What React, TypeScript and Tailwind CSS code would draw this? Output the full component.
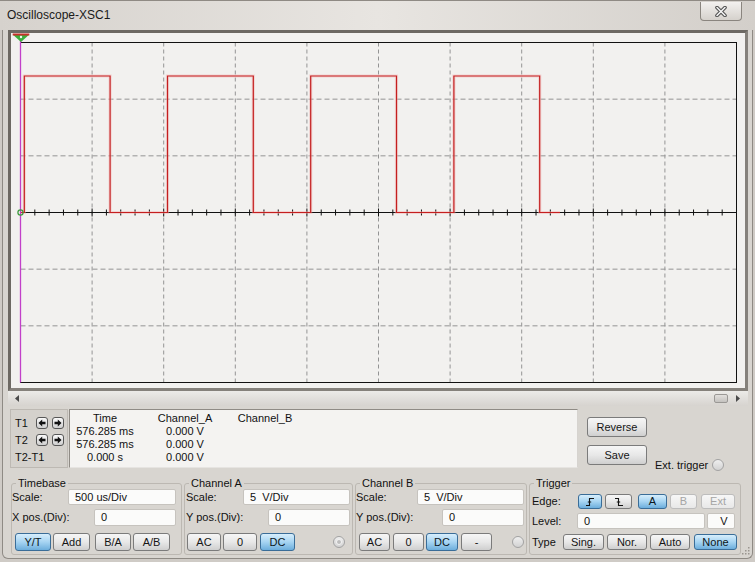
import React from "react";

type BtnKind = "normal" | "on" | "off";

function Btn({ children, className = "", kind = "normal" }: { children: React.ReactNode; className?: string; kind?: BtnKind }) {
  const skin =
    kind === "on"
      ? "border-[#3a6d98] bg-linear-to-b from-[#d7eefc] via-[#a6d4f2] to-[#6caedc] text-[#0b1620]"
      : kind === "off"
        ? "border-[#bdbdbd] bg-linear-to-b from-[#f7f7f7] to-[#e8e8e8] text-[#a5a5a5]"
        : "border-[#7b7b7b] bg-linear-to-b from-[#f6f6f6] via-[#e8e8e8] to-[#cfcfcf] text-[#151515]";
  return (
    <div className={`flex h-full shrink-0 items-center justify-center rounded-[3px] border text-[11px] leading-none ${skin} ${className}`}>
      {children}
    </div>
  );
}

function Field({ children, className = "" }: { children: React.ReactNode; className?: string }) {
  return (
    <div className={`flex h-full shrink-0 items-center whitespace-pre rounded-[2px] border border-[#c6c3be] bg-[#fbfbfa] pl-[6px] text-[11px] leading-none ${className}`}>
      {children}
    </div>
  );
}

function Radio({ dot = false, className = "" }: { dot?: boolean; className?: string }) {
  return (
    <div className={`flex h-[12px] w-[12px] shrink-0 items-center justify-center rounded-full border border-[#a2a2a2] bg-linear-to-b from-[#efefef] to-[#d2d2d2] ${className}`}>
      {dot && <div className="h-[6px] w-[6px] rounded-full border border-[#f4f4f4] bg-[#bdbdbd]" />}
    </div>
  );
}

function Group({ title, className = "", children }: { title: string; className?: string; children: React.ReactNode }) {
  return (
    <fieldset className={`h-[78px] shrink-0 rounded-[3px] border border-[#bcb8b2] p-0 ${className}`}>
      <legend className="ml-[4px] px-[2px] text-[11px] leading-[12px]">{title}</legend>
      {children}
    </fieldset>
  );
}

function ArrowBtn({ dir }: { dir: "l" | "r" }) {
  return (
    <div className="flex h-[12px] w-[12px] items-center justify-center rounded-[3px] border border-[#575757] bg-linear-to-b from-[#fafafa] to-[#cfcfcf]">
      <svg width="8" height="8" viewBox="0 0 8 8">
        <path
          d={dir === "l" ? "M0.5 4 L4.2 0.6 V2.7 H7.5 V5.3 H4.2 V7.4 Z" : "M7.5 4 L3.8 0.6 V2.7 H0.5 V5.3 H3.8 V7.4 Z"}
          fill="#111"
        />
      </svg>
    </div>
  );
}

function Plot() {
  const L = 9.5;
  const T = 9.5;
  const W = 716;
  const H = 340;
  const dx = W / 10;
  const dy = H / 6;
  const cy = T + dy * 3;
  const high = 43;
  const period = 143.2;
  const highW = 85.8;
  let d = `M10 ${cy} H13.3`;
  for (let i = 0; i < 4; i++) {
    const r = 13.3 + i * period;
    d += ` V${high} H${r + highW} V${cy} H${i < 3 ? r + period : 549}`;
  }
  const vx = Array.from({ length: 9 }, (_, i) => L + (i + 1) * dx);
  const hy = [1, 2, 4, 5].map((k) => T + k * dy);
  const ticks = Array.from({ length: 49 }, (_, j) => L + (j + 1) * (dx / 5));
  return (
    <svg width="734" height="355" viewBox="0 0 734 355" className="block">
      {vx.map((x) => (
        <line key={x} x1={x} y1={T} x2={x} y2={T + H} stroke="#949494" strokeWidth="1" strokeDasharray="4 3" />
      ))}
      {hy.map((y) => (
        <line key={y} x1={L} y1={y} x2={L + W} y2={y} stroke="#949494" strokeWidth="1" strokeDasharray="5 3" />
      ))}
      <rect x={L} y={T} width={W} height={H} fill="none" stroke="#111" strokeWidth="1" />
      <line x1={L} y1={cy} x2={L + W} y2={cy} stroke="#111" strokeWidth="1" />
      {ticks.map((x, j) => (
        <line key={x} x1={x} y1={cy - ((j + 1) % 5 === 0 ? 4 : 3)} x2={x} y2={cy + ((j + 1) % 5 === 0 ? 4 : 3)} stroke="#111" strokeWidth="1" />
      ))}
      <path d={d} fill="none" stroke="#f2b0b0" strokeWidth="3.2" opacity="0.45" />
      <path d={d} fill="none" stroke="#c41f1f" strokeWidth="1.2" />
      <line x1={L} y1={5} x2={L} y2={T + H} stroke="#c13fc9" strokeWidth="1.3" />
      <circle cx={L} cy={cy} r="2.6" fill="none" stroke="#3b9a3b" strokeWidth="1.2" />
      <polygon points="1.7,1.5 18.3,1.5 10,9" fill="#3caf3c" />
      <rect x="1.7" y="0.5" width="16.6" height="2" fill="#c8302a" />
      <circle cx="10" cy="4" r="1.2" fill="#f4f4f4" />
    </svg>
  );
}

export default function App() {
  return (
    <div className="relative flex h-[562px] w-[755px] flex-col overflow-hidden bg-[#cfcbc6] font-['Liberation_Sans',Arial,sans-serif] text-[#111]">
      <div className="flex h-[30px] shrink-0 items-start justify-between border-t border-[#8f8a84] bg-linear-to-r from-[#d6d2cd] via-[#e8e5e1] to-[#d3cfca] pl-[7px] pr-[13px]">
        <span className="pt-[6px] text-[12px] leading-[16px] text-[#1a1a1a]">Oscilloscope-XSC1</span>
        <div className="mt-[1px] flex h-[19px] w-[42px] items-center justify-center rounded-b-[4px] border border-t-0 border-[#8a857f] bg-linear-to-b from-[#f3f1ef] to-[#d5d1cc]">
          <svg width="12" height="11" viewBox="0 0 12 11">
            <path d="M2 1.5 L10 9.5 M10 1.5 L2 9.5" stroke="#4d4d4d" strokeWidth="3.6" strokeLinecap="round" />
            <path d="M2 1.5 L10 9.5 M10 1.5 L2 9.5" stroke="#f4f4f4" strokeWidth="1.6" strokeLinecap="round" />
          </svg>
        </div>
      </div>

      <div className="relative mx-[2px] mb-[3px] flex flex-1 flex-col rounded-b-[6px] border border-t-0 border-[#8e8a84] bg-[#d8d5d0]">
        <div className="ml-[5px] h-[361px] w-[740px] shrink-0 border-[3px] border-b-[#85817b] border-l-[#6d6963] border-r-[#85817b] border-t-[#6d6963] bg-[#f2f1ef]">
          <Plot />
        </div>

        <div className="ml-[5px] flex h-[15px] w-[740px] shrink-0 items-center bg-linear-to-b from-[#ecebe8] to-[#d6d3cf] pl-[7px] pr-[8px]">
          <svg width="4" height="7" viewBox="0 0 4 7">
            <path d="M4 0 L0 3.5 L4 7 Z" fill="#4a4a4a" />
          </svg>
          <div className="flex-1" />
          <div className="h-[9px] w-[14px] rounded-[2px] border border-[#9a9895] bg-linear-to-b from-[#e2e0dd] to-[#c4c2bf]" />
          <svg width="4" height="7" viewBox="0 0 4 7" className="ml-[8px]">
            <path d="M0 0 L4 3.5 L0 7 Z" fill="#4a4a4a" />
          </svg>
        </div>

        <div className="ml-[7px] mt-[3px] flex h-[59px] shrink-0">
          <div className="w-[58px] border border-[#bdb9b3] bg-[#d4d1cc] pl-[4px] text-[11px]">
            <div className="mt-[7px] flex h-[12px] items-center">
              <span className="w-[21px] leading-none">T1</span>
              <ArrowBtn dir="l" />
              <div className="ml-[4px]">
                <ArrowBtn dir="r" />
              </div>
            </div>
            <div className="mt-[5px] flex h-[12px] items-center">
              <span className="w-[21px] leading-none">T2</span>
              <ArrowBtn dir="l" />
              <div className="ml-[4px]">
                <ArrowBtn dir="r" />
              </div>
            </div>
            <div className="mt-[5px] leading-[12px]">T2-T1</div>
          </div>

          <div className="ml-[1px] w-[509px] border border-b-[#e6e4e1] border-l-[#8f8b85] border-r-[#d6d3cf] border-t-[#8f8b85] bg-[#f4f3f1] pt-[2px] text-[11px] leading-[13px]">
            <div className="grid grid-cols-[70px_90px_70px] text-center">
              <span>Time</span>
              <span>Channel_A</span>
              <span>Channel_B</span>
              <span>576.285 ms</span>
              <span>0.000 V</span>
              <span />
              <span>576.285 ms</span>
              <span>0.000 V</span>
              <span />
              <span>0.000 s</span>
              <span>0.000 V</span>
              <span />
            </div>
          </div>

          <div className="ml-[9px] flex flex-col">
            <div className="mt-[8px] h-[20px]">
              <Btn className="w-[60px]">Reverse</Btn>
            </div>
            <div className="mt-[8px] h-[20px]">
              <Btn className="w-[60px]">Save</Btn>
            </div>
          </div>

          <div className="ml-[8px] mt-[50px] flex h-[12px] items-center">
            <span className="text-[11px] leading-none">Ext. trigger</span>
            <Radio className="ml-[4px]" />
          </div>
        </div>

        <div className="ml-[8px] mt-[9px] flex gap-[2px]">
          <Group title="Timebase" className="w-[171px]">
            <div className="flex h-[16px] items-center text-[11px]">
              <span className="w-[56px] leading-none">Scale:</span>
              <Field className="w-[108px]">500 us/Div</Field>
            </div>
            <div className="mt-[4px] flex h-[17px] items-center text-[11px]">
              <span className="w-[82px] leading-none">X pos.(Div):</span>
              <Field className="w-[82px]">0</Field>
            </div>
            <div className="ml-[3px] mt-[7px] flex h-[18px]">
              <Btn kind="on" className="w-[36px]">Y/T</Btn>
              <Btn className="ml-[2px] w-[37px]">Add</Btn>
              <Btn className="ml-[5px] w-[36px]">B/A</Btn>
              <Btn className="ml-[2px] w-[37px]">A/B</Btn>
            </div>
          </Group>

          <Group title="Channel A" className="w-[169px]">
            <div className="ml-[1px] flex h-[16px] items-center text-[11px]">
              <span className="w-[57px] leading-none">Scale:</span>
              <Field className="w-[107px]">5  V/Div</Field>
            </div>
            <div className="ml-[1px] mt-[4px] flex h-[17px] items-center text-[11px]">
              <span className="w-[82px] leading-none">Y pos.(Div):</span>
              <Field className="w-[82px]">0</Field>
            </div>
            <div className="ml-[2px] mt-[7px] flex h-[18px] items-center">
              <Btn className="w-[34px]">AC</Btn>
              <Btn className="ml-[2px] w-[34px]">0</Btn>
              <Btn kind="on" className="ml-[3px] w-[35px]">DC</Btn>
              <Radio dot className="ml-[38px]" />
            </div>
          </Group>

          <Group title="Channel B" className="w-[172px]">
            <div className="flex h-[16px] items-center text-[11px]">
              <span className="w-[61px] leading-none">Scale:</span>
              <Field className="w-[107px]">5  V/Div</Field>
            </div>
            <div className="mt-[4px] flex h-[17px] items-center text-[11px]">
              <span className="w-[86px] leading-none">Y pos.(Div):</span>
              <Field className="w-[82px]">0</Field>
            </div>
            <div className="ml-[3px] mt-[7px] flex h-[18px] items-center">
              <Btn className="w-[31px]">AC</Btn>
              <Btn className="ml-[3px] w-[31px]">0</Btn>
              <Btn kind="on" className="ml-[2px] w-[32px]">DC</Btn>
              <Btn className="ml-[3px] w-[31px]">-</Btn>
              <Radio className="ml-[20px]" />
            </div>
          </Group>

          <Group title="Trigger" className="w-[212px]">
            <div className="ml-[2px] mt-[5px] flex h-[15px] items-center text-[11px]">
              <span className="w-[46px] leading-none">Edge:</span>
              <Btn kind="on" className="w-[24px]">
                <svg width="10" height="10" viewBox="0 0 10 10">
                  <path d="M1 8.5 H4.5 V1.5 H9 M2.8 5 H6.2" fill="none" stroke="#111" strokeWidth="1.1" />
                </svg>
              </Btn>
              <Btn className="ml-[3px] w-[27px]">
                <svg width="10" height="10" viewBox="0 0 10 10">
                  <path d="M1 1.5 H4.5 V8.5 H9 M2.8 5 H6.2" fill="none" stroke="#111" strokeWidth="1.1" />
                </svg>
              </Btn>
              <Btn kind="on" className="ml-[6px] w-[29px]">A</Btn>
              <Btn kind="off" className="ml-[3px] w-[27px]">B</Btn>
              <Btn kind="off" className="ml-[4px] w-[34px]">Ext</Btn>
            </div>
            <div className="ml-[2px] mt-[4px] flex h-[16px] items-center text-[11px]">
              <span className="w-[45px] leading-none">Level:</span>
              <Field className="w-[128px] pl-[4px]">0</Field>
              <Field className="ml-[2px] w-[28px] justify-center pl-0">V</Field>
            </div>
            <div className="ml-[2px] mt-[5px] flex h-[16px] items-center text-[11px]">
              <span className="w-[31px] leading-none">Type</span>
              <Btn className="w-[41px]">Sing.</Btn>
              <Btn className="ml-[3px] w-[40px]">Nor.</Btn>
              <Btn className="ml-[3px] w-[40px]">Auto</Btn>
              <Btn kind="on" className="ml-[4px] w-[43px]">None</Btn>
            </div>
          </Group>
        </div>

        <svg width="9" height="9" viewBox="0 0 9 9" className="absolute bottom-[3px] right-[2px]">
          {[
            [7, 1],
            [4, 4],
            [7, 4],
            [1, 7],
            [4, 7],
            [7, 7],
          ].map(([x, y]) => (
            <rect key={`${x}-${y}`} x={x} y={y} width="1.5" height="1.5" fill="#9a968f" />
          ))}
        </svg>
      </div>
    </div>
  );
}
